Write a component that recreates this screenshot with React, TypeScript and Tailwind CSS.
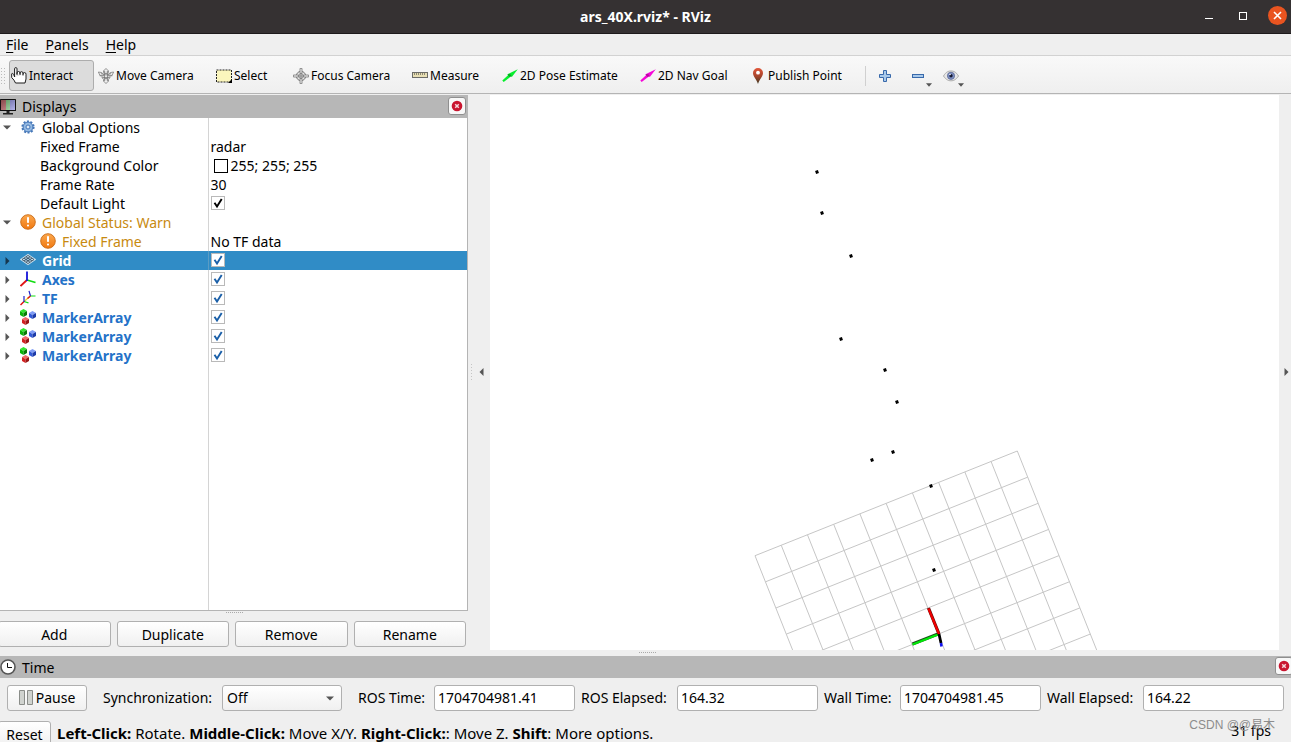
import React from "react";

type IconProps = { className?: string };

const ui = "font-['Noto_Sans','Open_Sans',sans-serif]";

function HandIcon() {
  return (
    <svg width="16" height="17" viewBox="0 0 16 17" className="-ml-px shrink-0">
      <path
        d="M3.6 10V1.800a1.200 1.200 0 0 1 2.400 0V8M6 7V6a1.500 1.500 0 0 1 3 0V8M9 7V6.200a1.500 1.500 0 0 1 3 0V8.500M12 7.500V7a1.500 1.500 0 0 1 3 .2V12L14 16H4.500L3 13.200.7 10.500V6.800C1.500 6.200 2.400 6.600 2.700 7.500L3.600 10"
        fill="#fff"
        stroke="#1c1c1c"
        strokeWidth="1"
        strokeLinejoin="round"
      />
    </svg>
  );
}

function MoveIcon() {
  return (
    <svg width="16" height="16" viewBox="0 0 16 16" className="shrink-0">
      <g fill="#f0f0f0" stroke="#6e6e6e" strokeWidth=".7">
        <circle cx="8" cy="8" r="4.200" fill="#e6e6e6" />
        <path d="M4.300 6.800h7.400M4.300 9.500h7.400M6.500 4.500v7M9.500 4.500v7" fill="none" />
        <path d="M8 .5 11 3.400H9.200V5.500H6.800V3.400H5z" />
        <path d="M8 15.500 11 12.600H9.200V10.500H6.800v2.100H5z" />
        <path d="M.4 4 3.800 4.600 3.300 5.600 6 6.600 5.400 8 2.800 7 2.300 8.200z" />
        <path d="M15.600 4 12.200 4.600l.5 1L10 6.600l.6 1.400 2.600-1 .5 1.200z" />
      </g>
    </svg>
  );
}

function SelectIcon() {
  return (
    <svg width="16" height="14" viewBox="0 0 16 14" className="shrink-0">
      <rect x=".5" y="1" width="15" height="12" fill="#fbf6bd" stroke="#222" strokeDasharray="2 1" />
      <path d="M16 10v4h-4z" fill="#000" />
    </svg>
  );
}

function FocusIcon() {
  return (
    <svg width="16" height="16" viewBox="0 0 16 16" className="shrink-0" fill="none" stroke="#777">
      <circle cx="8" cy="8" r="4.7" fill="#e4e4e4" />
      <circle cx="8" cy="8" r="2.3" strokeWidth=".8" />
      <path d="M7 .4h2v5H7zM7 10.6h2v5H7zM.4 7h5v2h-5zM10.6 7h5v2h-5z" fill="#eee" strokeWidth=".8" />
      <path d="M8 5v6M5 8h6" strokeWidth=".8" />
    </svg>
  );
}

function MeasureIcon() {
  return (
    <svg width="16" height="16" viewBox="0 0 16 16" className="shrink-0">
      <rect x=".5" y="4.5" width="15" height="5" fill="#e8dfb4" stroke="#6b6b68" />
      <path d="M2.5 5v2M4.5 5v2M6.5 5v2M8.5 5v2M10.5 5v2M12.5 5v2" stroke="#8b8771" />
    </svg>
  );
}

function ArrowIcon({ color, dark }: { color: string; dark: string }) {
  return (
    <svg width="16" height="16" viewBox="0 0 16 16" className="shrink-0">
      <path d="M.3 12.600 6 7.300 5.500 6.200 15.800 1.200 10 8.800 8.800 8.600 1.700 14z" fill={color} />
      <path d="M6 7.300 5.500 6.200 8.200 6 9.800 8.200 8.800 8.600 7.500 9z" fill={dark} opacity=".45" />
    </svg>
  );
}

function PinIcon() {
  return (
    <svg width="16" height="16" viewBox="0 0 16 16" className="shrink-0">
      <defs>
        <linearGradient id="pin" x1="0" y1="0" x2="0" y2="1">
          <stop offset="0" stopColor="#e2573a" />
          <stop offset=".5" stopColor="#a8452c" />
          <stop offset="1" stopColor="#3c3a22" />
        </linearGradient>
      </defs>
      <path d="M8 0a5 5 0 0 1 5 5c0 3.500-3.500 6-5 11C6.500 11 3 8.500 3 5a5 5 0 0 1 5-5z" fill="url(#pin)" />
      <circle cx="8" cy="4.700" r="1.900" fill="#fff" />
    </svg>
  );
}

function PlusIcon() {
  return (
    <svg width="14" height="14" viewBox="0 0 14 14">
      <path d="M5.500 1.500h3v4h4v3h-4v4h-3v-4h-4v-3h4z" fill="#a9c9ea" stroke="#3869ab" />
    </svg>
  );
}

function MinusIcon() {
  return (
    <svg width="14" height="14" viewBox="0 0 14 14">
      <rect x="1.500" y="5.500" width="11" height="3" fill="#a9c9ea" stroke="#3869ab" />
    </svg>
  );
}

function EyeIcon() {
  return (
    <svg width="16" height="12" viewBox="0 0 16 12">
      <path d="M.5 6C3 1.800 5.500 1 8 1s5 .8 7.500 5C13 9.800 10.500 10.800 8 10.800S3 9.800.5 6z" fill="#e8e8e8" stroke="#aaa" />
      <circle cx="8" cy="5.800" r="3.600" fill="#7d8fc4" stroke="#5a6791" strokeWidth=".8" />
      <circle cx="8" cy="5.800" r="1.700" fill="#151a33" />
      <circle cx="7" cy="4.500" r=".8" fill="#fff" />
    </svg>
  );
}

function Caret({ className = "" }: IconProps) {
  return (
    <svg width="6" height="4" viewBox="0 0 6 4" className={className}>
      <path d="M0 .3h6L3 3.800z" fill="#555" />
    </svg>
  );
}

function MonitorIcon() {
  return (
    <svg width="16" height="16" viewBox="0 0 16 16" className="shrink-0">
      <defs>
        <linearGradient id="screen" x1="0" y1="0" x2="1" y2="1">
          <stop offset="0" stopColor="#000" stopOpacity=".3" />
          <stop offset="1" stopColor="#fff" stopOpacity=".35" />
        </linearGradient>
      </defs>
      <rect x="0" y="0" width="16" height="12" rx=".5" fill="#111" />
      <rect x="1" y="1" width="5" height="10" fill="#c4686c" />
      <rect x="6" y="1" width="4" height="10" fill="#82cf87" />
      <rect x="10" y="1" width="5" height="10" fill="#8c8be0" />
      <rect x="1" y="1" width="14" height="10" fill="url(#screen)" />
      <path d="M6.500 12h3v2h3.500v1.500H3V14h3.500z" fill="#222" />
    </svg>
  );
}

function ClockIcon() {
  return (
    <svg width="16" height="16" viewBox="0 0 16 16" className="shrink-0">
      <circle cx="8" cy="8" r="7" fill="#fff" stroke="#555" strokeWidth="1.600" />
      <path d="M7.500 4v4.500H12" fill="none" stroke="#111" />
    </svg>
  );
}

function GearIcon() {
  return (
    <svg width="16" height="16" viewBox="0 0 16 16">
      <circle cx="8" cy="8" r="5.600" fill="none" stroke="#4577b8" strokeWidth="2" strokeDasharray="2 1.520" />
      <circle cx="8" cy="8" r="4.900" fill="#94b9e2" stroke="#4577b8" />
      <circle cx="8" cy="8" r="2" fill="#dbe8f6" stroke="#4577b8" />
    </svg>
  );
}

function WarnIcon() {
  return (
    <svg width="16" height="16" viewBox="0 0 16 16">
      <defs>
        <linearGradient id="warn" x1="0" y1="0" x2="0" y2="1">
          <stop offset="0" stopColor="#fba84e" />
          <stop offset="1" stopColor="#f07810" />
        </linearGradient>
      </defs>
      <circle cx="8" cy="8" r="7.300" fill="url(#warn)" stroke="#c96a14" strokeWidth=".9" />
      <rect x="7" y="3" width="2" height="6" rx=".8" fill="#fff" />
      <rect x="7" y="10.500" width="2" height="2" rx=".8" fill="#fff" />
    </svg>
  );
}

function GridIcon() {
  return (
    <svg width="16" height="16" viewBox="0 0 16 16">
      <path d="M8 3.400 14 7.500 8 11.600 2 7.500z" fill="#9cc4de" stroke="#c4dcea" strokeWidth="2.600" />
      <path d="M8 3.400 14 7.500 8 11.600 2 7.500zM6 4.800l6 4.100M4 6.100l6 4.100M10 4.800 4 8.900M12 6.100l-6 4.100" fill="none" stroke="#34495a" strokeWidth=".8" />
    </svg>
  );
}

function AxesIcon() {
  return (
    <svg width="16" height="16" viewBox="0 0 16 16" fill="none" strokeWidth="1.800">
      <path d="M7 9 .5 15" stroke="#e01515" />
      <path d="m7 9 8.500 2.500" stroke="#10dc10" />
      <path d="M7 10V.5" stroke="#1414d8" />
    </svg>
  );
}

function TfIcon() {
  return (
    <svg width="16" height="16" viewBox="0 0 16 16" fill="none" strokeWidth="1.200">
      <path d="M4 11.500 10.500 6" stroke="#e8cf28" />
      <path d="M4 11.500.5 15M10.500 6 7.500 8.500" stroke="#e01515" strokeWidth="1.500" />
      <path d="m4 11.500 4.500 1.300M10.500 6 15.500 6" stroke="#10dc10" />
      <path d="M4 12V6M10.500 6 9 .8" stroke="#2222c8" />
    </svg>
  );
}

function Cube({ x, y, top, left, right }: { x: number; y: number; top: string; left: string; right: string }) {
  return (
    <g transform={`translate(${x} ${y})`}>
      <path d="M0 2 3.500 0 7 2 3.500 4z" fill={top} />
      <path d="M0 2l3.500 2v4L0 6z" fill={left} />
      <path d="M7 2 3.500 4v4L7 6z" fill={right} />
    </g>
  );
}

function MarkersIcon() {
  return (
    <svg width="16" height="16" viewBox="0 0 16 16">
      <Cube x={0} y={0} top="#2fe62f" left="#08b408" right="#067a06" />
      <Cube x={9} y={2} top="#7f9cf5" left="#3159d8" right="#1c3aa8" />
      <Cube x={2} y={8} top="#f06a6a" left="#d42020" right="#981414" />
    </svg>
  );
}

function Tick({ color }: { color: string }) {
  return (
    <svg width="14" height="14" viewBox="0 0 14 14" className="pointer-events-none absolute inset-0">
      <path d="M3.500 6.800 6 10.500 10.700 3" fill="none" stroke={color} strokeWidth="1.900" />
    </svg>
  );
}

function CloseButton({ label }: { label: string }) {
  return (
    <button aria-label={label} className="mb-0.5 flex size-[18px] shrink-0 items-center justify-center rounded-[3px] border border-[#8f8f8f] bg-[#f8f8f8]">
      <svg width="12" height="12" viewBox="0 0 12 12">
        <circle cx="6" cy="6" r="5.300" fill="#c9152f" />
        <path d="m4.200 4.200 3.600 3.600m0-3.600L4.200 7.800" stroke="#f5d5da" strokeWidth="1.500" />
      </svg>
    </button>
  );
}

type Row = {
  name: string;
  arrow?: "open" | "closed";
  icon?: React.ReactNode;
  indent?: boolean;
  tone?: string;
  value?: string;
  swatch?: boolean;
  check?: string;
  selected?: boolean;
};

const display = "font-bold text-[#2472c8]";
const rows: Row[] = [
  { name: "Global Options", arrow: "open", icon: <GearIcon /> },
  { name: "Fixed Frame", value: "radar" },
  { name: "Background Color", value: "255; 255; 255", swatch: true },
  { name: "Frame Rate", value: "30" },
  { name: "Default Light", check: "#000" },
  { name: "Global Status: Warn", arrow: "open", icon: <WarnIcon />, tone: "text-[#c88a10]" },
  { name: "Fixed Frame", icon: <WarnIcon />, indent: true, tone: "text-[#c88a10]", value: "No TF data" },
  { name: "Grid", arrow: "closed", icon: <GridIcon />, tone: "font-bold text-white", check: "#1a5fa8", selected: true },
  { name: "Axes", arrow: "closed", icon: <AxesIcon />, tone: display, check: "#1a5fa8" },
  { name: "TF", arrow: "closed", icon: <TfIcon />, tone: display, check: "#1a5fa8" },
  { name: "MarkerArray", arrow: "closed", icon: <MarkersIcon />, tone: display, check: "#1a5fa8" },
  { name: "MarkerArray", arrow: "closed", icon: <MarkersIcon />, tone: display, check: "#1a5fa8" },
  { name: "MarkerArray", arrow: "closed", icon: <MarkersIcon />, tone: display, check: "#1a5fa8" },
];

function TreeRow({ row }: { row: Row }) {
  return (
    <tr className={row.selected ? "h-[19px] bg-[#308cc6]" : "h-[19px]"}>
      <td className={`border-r p-0 ${row.selected ? "border-[#5a9cc4]" : "border-[#d4d4d4]"}`}>
        <div className={`flex h-[19px] items-center ${row.indent ? "pl-10" : row.icon ? "pl-[3px]" : "pl-10"}`}>
          {row.arrow && (
            <button aria-label={`Toggle ${row.name}`} className="mr-[9px] flex size-2 items-center justify-center">
              {row.arrow === "open" ? (
                <svg width="8" height="5" viewBox="0 0 8 5">
                  <path d="M0 .5h8L4 4.500z" fill="#555" />
                </svg>
              ) : (
                <svg width="5" height="8" viewBox="0 0 5 8">
                  <path d="M.5 0v8l4-4z" fill={row.selected ? "#16364e" : "#555"} />
                </svg>
              )}
            </button>
          )}
          {row.icon && <span className="mr-1.5 mb-0.5 shrink-0">{row.icon}</span>}
          <span className={row.tone}>{row.name}</span>
        </div>
      </td>
      <td className="p-0">
        <div className="flex h-[19px] items-center pl-0.5">
          {row.swatch && <span className="mx-[3px] size-3.5 border border-black bg-white" />}
          {row.value}
          {row.check && (
            <span className="relative mb-0.5 size-3.5">
              <input type="checkbox" defaultChecked aria-label={row.name} className="block size-3.5 appearance-none border border-[#b9b9b9] bg-white" />
              <Tick color={row.check} />
            </span>
          )}
        </div>
      </td>
    </tr>
  );
}

const points = [
  [327, 77], [332, 118], [361, 161], [351, 244], [395, 275],
  [407, 307], [403, 357], [382, 365], [441, 391], [444, 475],
];

function Scene() {
  const ux = 26.23, uy = -10.47, vx = 10.43, vy = 26.15, ox = 265, oy = 460.7;
  const steps = Array.from({ length: 11 }, (_, i) => i);
  return (
    <svg viewBox="0 0 789 555" preserveAspectRatio="xMidYMid slice" className="absolute inset-0 size-full" role="img" aria-label="3D view">
      <g stroke="#c6c6c6" strokeWidth="1">
        {steps.map((i) => (
          <line key={`a${i}`} x1={ox + i * vx} y1={oy + i * vy} x2={ox + 10 * ux + i * vx} y2={oy + 10 * uy + i * vy} />
        ))}
        {steps.map((i) => (
          <line key={`b${i}`} x1={ox + i * ux} y1={oy + i * uy} x2={ox + i * ux + 10 * vx} y2={oy + i * uy + 10 * vy} />
        ))}
      </g>
      {points.map(([x, y]) => (
        <rect key={`${x}-${y}`} x={x - 1.5} y={y - 1.5} width="3" height="3" fill="#000" transform={`rotate(-20 ${x} ${y})`} />
      ))}
      <path d="M422.500 549 448 539" stroke="#1d4a1d" strokeWidth="3.200" />
      <path d="M422.500 549.500 448 539.500" stroke="#00e808" strokeWidth="2.200" />
      <path d="m438.500 513 10.500 26" stroke="#5a0808" strokeWidth="3.200" />
      <path d="m438.500 513.500 10.500 25.500" stroke="#f00000" strokeWidth="2.200" />
      <path d="m449 539 2 9" stroke="#000" strokeWidth="2.800" />
      <path d="m451 548 .5 3.500" stroke="#1010f0" strokeWidth="2.600" />
    </svg>
  );
}

const tools = [
  { name: "Interact", icon: <HandIcon />, box: "w-[85px] rounded-[3px] border-[#adadad] bg-[#dcdcdc]" },
  { name: "Move Camera", icon: <MoveIcon />, box: "w-[117px] border-transparent" },
  { name: "Select", icon: <SelectIcon />, box: "w-[76px] border-transparent" },
  { name: "Focus Camera", icon: <FocusIcon />, box: "w-[118px] border-transparent" },
  { name: "Measure", icon: <MeasureIcon />, box: "w-[89px] border-transparent" },
  { name: "2D Pose Estimate", icon: <ArrowIcon color="#08ee2e" dark="#045c14" />, box: "w-[137px] border-transparent" },
  { name: "2D Nav Goal", icon: <ArrowIcon color="#f508d8" dark="#6c0460" />, box: "w-[109px] border-transparent" },
  { name: "Publish Point", icon: <PinIcon />, box: "w-[118px] border-transparent" },
];

const pushButton = "h-[26px] rounded-[3px] border border-[#b0b0b0] bg-linear-to-b from-white to-[#f0f0f0]";

function TimeField({ id, label, value, labelWidth }: { id: string; label: string; value: string; labelWidth: string }) {
  return (
    <>
      <label htmlFor={id} className={`shrink-0 whitespace-nowrap ${labelWidth}`}>{label}</label>
      <input id={id} readOnly defaultValue={value} className="h-[26px] w-0 min-w-0 flex-1 rounded-[3px] border border-[#b0b0b0] bg-white px-[3px]" />
    </>
  );
}

export default function App() {
  return (
    <div className={`flex h-screen flex-col overflow-hidden bg-[#efefef] text-sm leading-[19px] text-black ${ui}`}>
      <header className="grid h-[34px] shrink-0 grid-cols-[1fr_auto_1fr] items-center border-b border-[#1d1a1b] bg-[#353132] text-sm text-white">
        <span />
        <h1 className="font-bold">ars_40X.rviz* - RViz</h1>
        <div className="flex items-center justify-end pr-1 pb-0.5">
          <button aria-label="Minimize" className="mr-[26px] h-2.5 w-2">
            <svg width="8" height="10" viewBox="0 0 8 10"><path d="M0 7.500h8" stroke="#fff" /></svg>
          </button>
          <button aria-label="Maximize" className="mr-[21px] size-2 border border-white" />
          <button aria-label="Close" className="flex size-[19px] items-center justify-center rounded-full bg-[#e95420]">
            <svg width="9" height="9" viewBox="0 0 9 9"><path d="m1 1 7 7m0-7L1 8" stroke="#fff" strokeWidth="1.600" /></svg>
          </button>
        </div>
      </header>

      <nav className="flex h-[22px] shrink-0 items-center gap-[17px] border-b border-[#d2d2d2] pl-1.5">
        {["File", "Panels", "Help"].map((m) => (
          <button key={m}><span className="underline underline-offset-2">{m[0]}</span>{m.slice(1)}</button>
        ))}
      </nav>

      <div className="flex h-[38px] shrink-0 items-center border-b border-[#b4b4b4] bg-linear-to-b from-[#f9f9f9] to-[#efefef] pt-0.5 text-xs">
        <svg width="6" height="18" viewBox="0 0 6 18" className="mr-[3px]">
          <path d="M1.500 1v17M4.500 1v17" stroke="#bbb" strokeDasharray="1 2" />
        </svg>
        <div className="flex gap-px">
          {tools.map((t) => (
            <button key={t.name} className={`flex h-[31px] items-center gap-0.5 border pl-0.5 whitespace-nowrap ${t.box}`}>
              {t.icon}
              {t.name}
            </button>
          ))}
        </div>
        <div className="flex h-5 items-center border-l border-[#d0d0d0] pl-3">
          <button aria-label="Add tool"><PlusIcon /></button>
          <button aria-label="Remove tool" className="relative ml-[19px]">
            <MinusIcon />
            <Caret className="absolute -right-[7px] -bottom-1" />
          </button>
          <button aria-label="Tool visibility" className="relative ml-[18px]">
            <EyeIcon />
            <Caret className="absolute -right-[5px] -bottom-[5px]" />
          </button>
        </div>
      </div>

      <main className="flex min-h-0 flex-1 pt-px">
        <section className="flex w-[468px] shrink-0 flex-col">
          <div className="flex h-[23px] shrink-0 items-center gap-1.5 bg-[#b7b7b7] pr-0.5">
            <MonitorIcon />
            <h2 className="flex-1">Displays</h2>
            <CloseButton label="Close Displays" />
          </div>
          <div className="min-h-0 flex-1 border-r border-b border-[#b4b4b4] bg-white">
            <table className="h-full w-full table-fixed border-collapse">
              <colgroup>
                <col className="w-[208px]" />
                <col />
              </colgroup>
              <tbody>
                {rows.map((r, i) => <TreeRow key={i} row={r} />)}
                <tr>
                  <td className="border-r border-[#d4d4d4] p-0" />
                  <td className="p-0" />
                </tr>
              </tbody>
            </table>
          </div>
          <div className="flex h-2.5 shrink-0 justify-center pt-px">
            <span className="h-px w-[17px] border-t border-dotted border-[#aaa]" />
          </div>
          <div className="mb-[9px] -ml-0.5 grid shrink-0 grid-cols-4 gap-1.5 pr-0.5">
            {["Add", "Duplicate", "Remove", "Rename"].map((b) => (
              <button key={b} className={pushButton}>{b}</button>
            ))}
          </div>
        </section>
        <button aria-label="Collapse left panel" className="flex w-[22px] shrink-0 items-center justify-between pr-1.5 pb-2 pl-0.5">
          <svg width="5" height="18" viewBox="0 0 5 18"><path d="M1.500 1v17" stroke="#c4c4c4" strokeDasharray="1 2" /></svg>
          <svg width="5" height="8" viewBox="0 0 5 8"><path d="M4.500 0v8L.5 4z" fill="#555" /></svg>
        </button>
        <div className="flex min-w-0 flex-1 flex-col">
          <div className="relative min-h-0 flex-1 overflow-hidden bg-white">
            <Scene />
          </div>
          <div className="flex h-1.5 shrink-0 items-start pt-0.5">
            <span className="ml-[149px] h-px w-[17px] border-t border-dotted border-[#aaa]" />
          </div>
        </div>
        <button aria-label="Collapse right panel" className="flex w-3 shrink-0 items-center justify-end pr-0.5 pb-2">
          <svg width="5" height="8" viewBox="0 0 5 8"><path d="M.5 0v8l4-4z" fill="#555" /></svg>
        </button>
      </main>

      <section className="shrink-0">
        <div className="-mr-0.5 flex h-[22px] items-center gap-1.5 bg-[#b7b7b7]">
          <ClockIcon />
          <h2 className="flex-1">Time</h2>
          <CloseButton label="Close Time" />
        </div>
        <div className="flex h-[39px] items-center gap-1.5 px-[7px]">
          <button className={`flex w-20 shrink-0 items-center justify-center gap-0.5 ${pushButton}`}>
            <svg width="15" height="15" viewBox="0 0 15 15">
              <path d="M.5.5h5v14h-5zM8.500.5h5v14h-5z" fill="#d0d3cf" stroke="#8a8d89" />
            </svg>
            Pause
          </button>
          <label htmlFor="sync" className="ml-2.5 w-[113px] shrink-0">Synchronization:</label>
          <span className="relative mr-2.5 shrink-0">
            <select id="sync" className={`block w-[120px] appearance-none px-1 ${pushButton}`}>
              <option>Off</option>
            </select>
            <svg width="8" height="5" viewBox="0 0 8 5" className="pointer-events-none absolute top-[11px] right-2">
              <path d="M0 .5h8L4 4.500z" fill="#555" />
            </svg>
          </span>
          <TimeField id="ros-time" label="ROS Time:" value="1704704981.41" labelWidth="w-[70px]" />
          <TimeField id="ros-elapsed" label="ROS Elapsed:" value="164.32" labelWidth="w-[90px]" />
          <TimeField id="wall-time" label="Wall Time:" value="1704704981.45" labelWidth="w-[70px]" />
          <TimeField id="wall-elapsed" label="Wall Elapsed:" value="164.22" labelWidth="w-[90px]" />
        </div>
      </section>

      <footer className="flex h-[25px] shrink-0 items-start gap-1.5 pt-1">
        <button className={`-ml-0.5 w-[53px] shrink-0 ${pushButton}`}>Reset</button>
        <p className="flex-1 text-[15px] leading-6 whitespace-nowrap">
          <b>Left-Click:</b> Rotate. <b>Middle-Click:</b> Move X/Y. <b>Right-Click:</b>: Move Z. <b>Shift</b>: More options.
        </p>
        <div className="relative mr-5">
          31 fps
          <span className="absolute -top-1 -right-1 text-xs whitespace-nowrap text-[#8c8c8c] font-['Liberation_Sans','Noto_Sans_CJK_SC',sans-serif]">CSDN @@易木</span>
        </div>
      </footer>
    </div>
  );
}
